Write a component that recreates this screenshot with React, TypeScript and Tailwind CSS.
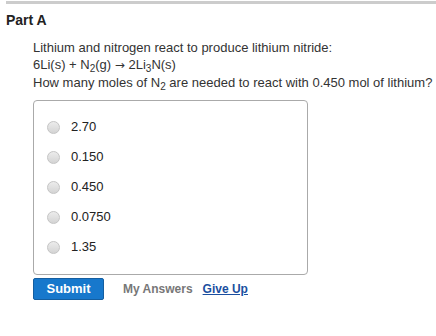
import React from 'react';

const choices = ['2.70', '0.150', '0.450', '0.0750', '1.35'];

export default function App() {
  return (
    <div className="min-h-[336px] w-[436px] bg-white pl-[6px] pt-[1px] font-['Liberation_Sans',Arial,sans-serif] text-[#333]">
      <div className="h-[3px] bg-[#cccccc]" />
      <h2 className="mt-[8px] text-[14px] font-bold leading-[16px] text-[#222]">Part A</h2>

      <div className="ml-[27px] mt-[11px]">
        <div className="text-[13px] leading-[17px]">
          <p>Lithium and nitrogen react to produce lithium nitride:</p>
          <p>
            6Li(s) + N<sub className="text-[10px]">2</sub>(g){' '}
            <span className="font-['DejaVu_Sans',sans-serif] text-[12px]">&rarr;</span> 2Li
            <sub className="text-[10px]">3</sub>N(s)
          </p>
          <p>
            How many moles of N<sub className="text-[10px]">2</sub> are needed to react with 0.450 mol of lithium?
          </p>
        </div>

        <div className="mt-[9px] w-[275px] rounded-[4px] border border-[#aaaaaa] px-[13px] pb-[12px] pt-[11px]">
          {choices.map((c) => (
            <label key={c} className="flex h-[30px] items-center gap-[11px] text-[13px] text-[#222]">
              <span className="h-[13px] w-[13px] rounded-full border border-[#c4c4c4] bg-gradient-to-b from-[#ececec] to-[#d4d4d4]" />
              <span>{c}</span>
            </label>
          ))}
        </div>

        <div className="mt-[3px] flex items-center text-[12px] font-bold">
          <button className="h-[22px] w-[71px] rounded-[2px] border border-[#145ea0] bg-[#1778cc] text-[13px] font-bold text-white">
            Submit
          </button>
          <span className="ml-[19px] text-[#777]">My Answers</span>
          <a className="ml-[10px] text-[#1b4fa0] underline">Give Up</a>
        </div>
      </div>
    </div>
  );
}
